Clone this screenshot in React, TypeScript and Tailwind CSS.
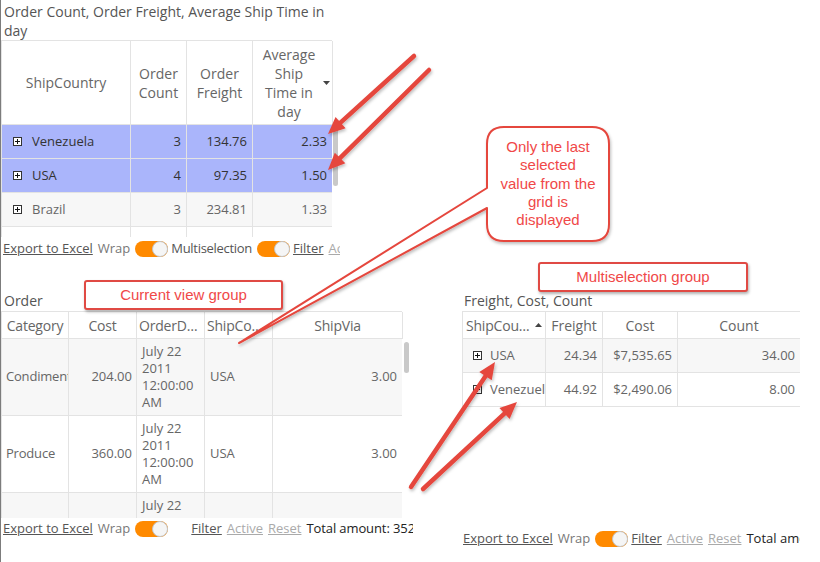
import React from "react";

const red = "#e5463d";

function PlusBox() {
    return (
        <svg width="9" height="9" viewBox="0 0 9 9" className="shrink-0">
            <rect x="0.5" y="0.5" width="8" height="8" fill="#fff" stroke="#333" />
            <line x1="2" y1="4.5" x2="7" y2="4.5" stroke="#111" />
            <line x1="4.5" y1="2" x2="4.5" y2="7" stroke="#111" />
        </svg>
    );
}

function Toggle() {
    return (
        <div className="relative w-[33px] h-[16px] -mr-[2px] rounded-full bg-[#ff8a00] shrink-0">
            <div className="absolute right-0 top-0 w-[16px] h-[16px] rounded-full bg-[#f5f5f5] border border-[#c4c4c4]"></div>
        </div>
    );
}

function Arrow({ x1, y1, x2, y2 }: { x1: number; y1: number; x2: number; y2: number }) {
    const a = Math.atan2(y2 - y1, x2 - x1);
    const len = 17;
    const half = 7.5;
    const bx = x2 - len * Math.cos(a);
    const by = y2 - len * Math.sin(a);
    const p1 = `${bx + half * Math.sin(a)},${by - half * Math.cos(a)}`;
    const p2 = `${bx - half * Math.sin(a)},${by + half * Math.cos(a)}`;
    return (
        <g filter="url(#shadow)">
            <line x1={x1} y1={y1} x2={bx + 2 * Math.cos(a)} y2={by + 2 * Math.sin(a)} stroke={red} strokeWidth="4.5" strokeLinecap="round" />
            <polygon points={`${x2},${y2} ${p1} ${p2}`} fill={red} />
        </g>
    );
}

// Top grid: Order Count, Order Freight, Average Ship Time
const topRows = [
    { country: "Venezuela", count: "3", freight: "134.76", time: "2.33", selected: true },
    { country: "USA", count: "4", freight: "97.35", time: "1.50", selected: true },
    { country: "Brazil", count: "3", freight: "234.81", time: "1.33", selected: false },
    { country: "", count: "", freight: "", time: "", selected: false },
];

const orderRows = [
    { category: "Condiment", cost: "204.00", date: ["July 22", "2011", "12:00:00", "AM"], country: "USA", via: "3.00" },
    { category: "Produce", cost: "360.00", date: ["July 22", "2011", "12:00:00", "AM"], country: "USA", via: "3.00" },
    { category: "", cost: "", date: ["July 22", "2011", "12:00:00", "AM"], country: "", via: "" },
];

const freightRows = [
    { country: "USA", freight: "24.34", cost: "$7,535.65", count: "34.00" },
    { country: "Venezuela", freight: "44.92", cost: "$2,490.06", count: "8.00" },
];

function TopGrid() {
    return (
        <div className="relative w-[338px]">
            {/* header */}
            <div className="grid grid-cols-[129px_56px_66px_80px] w-[331px] h-[85px] border-t border-l border-[#e3e3e3] text-[14px] leading-[19px] text-[#666]">
                <div className="flex items-center justify-center border-r border-b border-[#e3e3e3]">ShipCountry</div>
                <div className="flex items-center justify-center text-center border-r border-b border-[#e3e3e3]">Order<br />Count</div>
                <div className="flex items-center justify-center text-center border-r border-b border-[#e3e3e3]">Order<br />Freight</div>
                <div className="flex items-center border-r border-b border-[#e3e3e3]">
                    <div className="flex-1 text-center pl-[2px]">Average<br />Ship<br />Time in<br />day</div>
                    <svg width="7" height="4" viewBox="0 0 7 4" className="mr-[2px] shrink-0">
                        <polygon points="0,0 7,0 3.5,4" fill="#444" />
                    </svg>
                </div>
            </div>
            {/* body */}
            <div className="h-[112px] overflow-hidden w-[331px]">
                {topRows.map((r, i) => (
                    <div
                        key={i}
                        className={`grid grid-cols-[129px_56px_66px_80px] h-[34px] border-l border-[#e3e3e3] text-[13px] ${r.selected ? "bg-[#aab5fb] text-[#333]" : i % 2 === 0 ? "bg-[#f7f7f7] text-[#666]" : "bg-white text-[#666]"}`}
                    >
                        <div className="flex items-center gap-[10px] pl-[11px] border-r border-b border-[#e3e3e3]">
                            {r.country && <PlusBox />}
                            <span>{r.country}</span>
                        </div>
                        <div className="flex items-center justify-end pr-[5px] border-r border-b border-[#e3e3e3]">{r.count}</div>
                        <div className="flex items-center justify-end pr-[5px] border-r border-b border-[#e3e3e3]">{r.freight}</div>
                        <div className="flex items-center justify-end pr-[5px] border-r border-b border-[#e3e3e3]">{r.time}</div>
                    </div>
                ))}
            </div>
            <div className="absolute left-[332px] top-[85px] w-[5px] h-[61px] rounded-full bg-[#c9c9c9]"></div>
        </div>
    );
}

function OrderGrid() {
    return (
        <div className="relative w-[409px]">
            <div className="grid grid-cols-[67px_68px_68px_68px_130px] w-[401px] h-[28px] border-t border-l border-[#e3e3e3] text-[14px] text-[#666] tracking-[-0.2px]">
                {["Category", "Cost", "OrderDate", "ShipCountry", "ShipVia"].map((h) => (
                    <div key={h} className="flex items-center border-r border-b border-[#e3e3e3] px-[2px] min-w-0">
                        <span className="block w-full text-center truncate">{h}</span>
                    </div>
                ))}
            </div>
            <div className="h-[179px] overflow-hidden w-[401px]">
                {orderRows.map((r, i) => (
                    <div
                        key={i}
                        className={`grid grid-cols-[67px_68px_68px_68px_130px] h-[77px] border-l border-[#e3e3e3] text-[13px] text-[#666] ${i % 2 === 0 ? "bg-[#f7f7f7]" : "bg-white"}`}
                    >
                        <div className="flex items-center pl-[4px] overflow-hidden whitespace-nowrap tracking-[-0.2px] border-r border-b border-[#e3e3e3]">{r.category}</div>
                        <div className="flex items-center justify-end pr-[4px] border-r border-b border-[#e3e3e3]">{r.cost}</div>
                        <div className="flex flex-col justify-center pl-[5px] leading-[17px] border-r border-b border-[#e3e3e3]">
                            {r.date.map((d) => (
                                <span key={d}>{d}</span>
                            ))}
                        </div>
                        <div className="flex items-center pl-[5px] border-r border-b border-[#e3e3e3]">{r.country}</div>
                        <div className="flex items-center justify-end pr-[5px] border-r border-b border-[#e3e3e3]">{r.via}</div>
                    </div>
                ))}
            </div>
            <div className="absolute left-[403px] top-[31px] w-[5px] h-[31px] rounded-full bg-[#c9c9c9]"></div>
        </div>
    );
}

function FreightGrid() {
    return (
        <div className="w-[338px]">
            <div className="grid grid-cols-[83px_57px_75px_123px] h-[28px] border-t border-l border-[#e3e3e3] text-[14px] text-[#666]">
                <div className="flex items-center gap-[4px] pl-[3px] pr-[3px] border-r border-b border-[#e3e3e3] min-w-0 tracking-[-0.2px]">
                    <span className="truncate">ShipCountry</span>
                    <svg width="7" height="4" viewBox="0 0 7 4" className="shrink-0">
                        <polygon points="0,4 7,4 3.5,0" fill="#444" />
                    </svg>
                </div>
                {["Freight", "Cost", "Count"].map((h) => (
                    <div key={h} className="flex items-center justify-center border-r border-b border-[#e3e3e3]">{h}</div>
                ))}
            </div>
            <div className="h-[190px]">
                {freightRows.map((r, i) => (
                    <div
                        key={i}
                        className={`grid grid-cols-[83px_57px_75px_123px] h-[34px] border-l border-[#e3e3e3] text-[13px] text-[#666] ${i % 2 === 0 ? "bg-[#f7f7f7]" : "bg-white"}`}
                    >
                        <div className="flex items-center gap-[8px] pl-[10px] overflow-hidden whitespace-nowrap border-r border-b border-[#e3e3e3]">
                            <PlusBox />
                            <span>{r.country}</span>
                        </div>
                        <div className="flex items-center justify-end pr-[5px] border-r border-b border-[#e3e3e3]">{r.freight}</div>
                        <div className="flex items-center justify-end pr-[5px] border-r border-b border-[#e3e3e3]">{r.cost}</div>
                        <div className="flex items-center justify-end pr-[5px] border-r border-b border-[#e3e3e3]">{r.count}</div>
                    </div>
                ))}
            </div>
        </div>
    );
}

function Annotations() {
    return (
        <>
            <svg width="820" height="562" viewBox="0 0 820 562" className="absolute left-0 top-0 pointer-events-none">
                <defs>
                    <filter id="shadow" x="-20%" y="-20%" width="140%" height="140%">
                        <feDropShadow dx="1" dy="2" stdDeviation="1.5" floodColor="#000" floodOpacity="0.25" />
                    </filter>
                </defs>
                <Arrow x1={413} y1={56} x2={327} y2={134} />
                <Arrow x1={428} y1={70} x2={327} y2={170} />
                <Arrow x1={410} y1={487} x2={494} y2={362} />
                <Arrow x1={422} y1={489} x2={516} y2={402} />
                {/* callout bubble with tail */}
                <path
                    d="M 503,127 H 591 Q 608,127 608,144 V 224 Q 608,241 591,241 H 503 Q 486,241 486,224 V 208 L 238,343 L 486,188 V 144 Q 486,127 503,127 Z"
                    fill="#fff"
                    stroke={red}
                    strokeWidth="2"
                    strokeLinejoin="round"
                    filter="url(#shadow)"
                />
            </svg>

            <div className="absolute left-[486px] top-[138px] w-[122px] text-center font-['Liberation_Sans',Arial,sans-serif] text-[15px] leading-[18.3px] text-[#f04848]">
                Only the last<br />selected<br />value from the<br />grid is<br />displayed
            </div>

            <div className="absolute left-[83px] top-[280px] w-[199px] h-[30px] flex items-center justify-center bg-white border-2 border-[#e04a44] rounded-[3px] shadow-[1px_2px_3px_rgba(0,0,0,0.3)] font-['Liberation_Sans',Arial,sans-serif] text-[15px] text-[#f04848]">
                Current view group
            </div>
            <div className="absolute left-[537px] top-[262px] w-[210px] h-[30px] flex items-center justify-center bg-white border-2 border-[#e04a44] rounded-[3px] shadow-[1px_2px_3px_rgba(0,0,0,0.3)] font-['Liberation_Sans',Arial,sans-serif] text-[15px] text-[#f04848]">
                Multiselection group
            </div>
        </>
    );
}

export default function App() {
    return (
        <div className="relative w-[820px] h-[562px] overflow-hidden bg-white border-l border-[#7c7c7c] font-['Open_Sans','DejaVu_Sans',sans-serif]">
            {/* Top group */}
            <div className="w-[339px] overflow-hidden">
                <div className="pl-[3px] pt-[2px] w-[334px] text-[14px] leading-[19px] text-[#555]">
                    Order Count, Order Freight, Average Ship Time in day
                </div>
                <TopGrid />
                <div className="flex items-center gap-[5px] h-[24px] pl-[2px] text-[13px] whitespace-nowrap">
                    <span className="underline text-[#555]">Export to Excel</span>
                    <span className="text-[#777]">Wrap</span>
                    <Toggle />
                    <span className="text-[#555] tracking-[-0.3px]">Multiselection</span>
                    <Toggle />
                    <span className="underline text-[#555]">Filter</span>
                    <span className="underline text-[#aaa]">Active</span>
                </div>
            </div>

            {/* Bottom groups */}
            <div className="flex mt-[29px]">
                <div className="w-[412px] overflow-hidden">
                    <div className="h-[21px] leading-[21px] pl-[3px] text-[14px] text-[#555]">Order</div>
                    <OrderGrid />
                    <div className="flex items-center gap-[5px] h-[22px] pl-[2px] text-[13px] whitespace-nowrap">
                        <span className="underline text-[#555]">Export to Excel</span>
                        <span className="text-[#777]">Wrap</span>
                        <Toggle />
                        <span className="ml-[20px] underline text-[#555]">Filter</span>
                        <span className="underline text-[#aaa]">Active</span>
                        <span className="underline text-[#aaa]">Reset</span>
                        <span className="text-[#222] tracking-[-0.1px]">Total amount: 352</span>
                    </div>
                </div>
                <div className="ml-[49px] w-[338px] overflow-hidden">
                    <div className="h-[21px] leading-[21px] pl-[2px] text-[14px] text-[#555]">Freight, Cost, Count</div>
                    <FreightGrid />
                    <div className="flex items-center gap-[5px] h-[20px] pl-[1px] text-[13px] whitespace-nowrap">
                        <span className="underline text-[#555]">Export to Excel</span>
                        <span className="text-[#777]">Wrap</span>
                        <Toggle />
                        <span className="underline text-[#555]">Filter</span>
                        <span className="underline text-[#aaa]">Active</span>
                        <span className="underline text-[#aaa]">Reset</span>
                        <span className="text-[#222]">Total amount: 352</span>
                    </div>
                </div>
            </div>

            <Annotations />
        </div>
    );
}
